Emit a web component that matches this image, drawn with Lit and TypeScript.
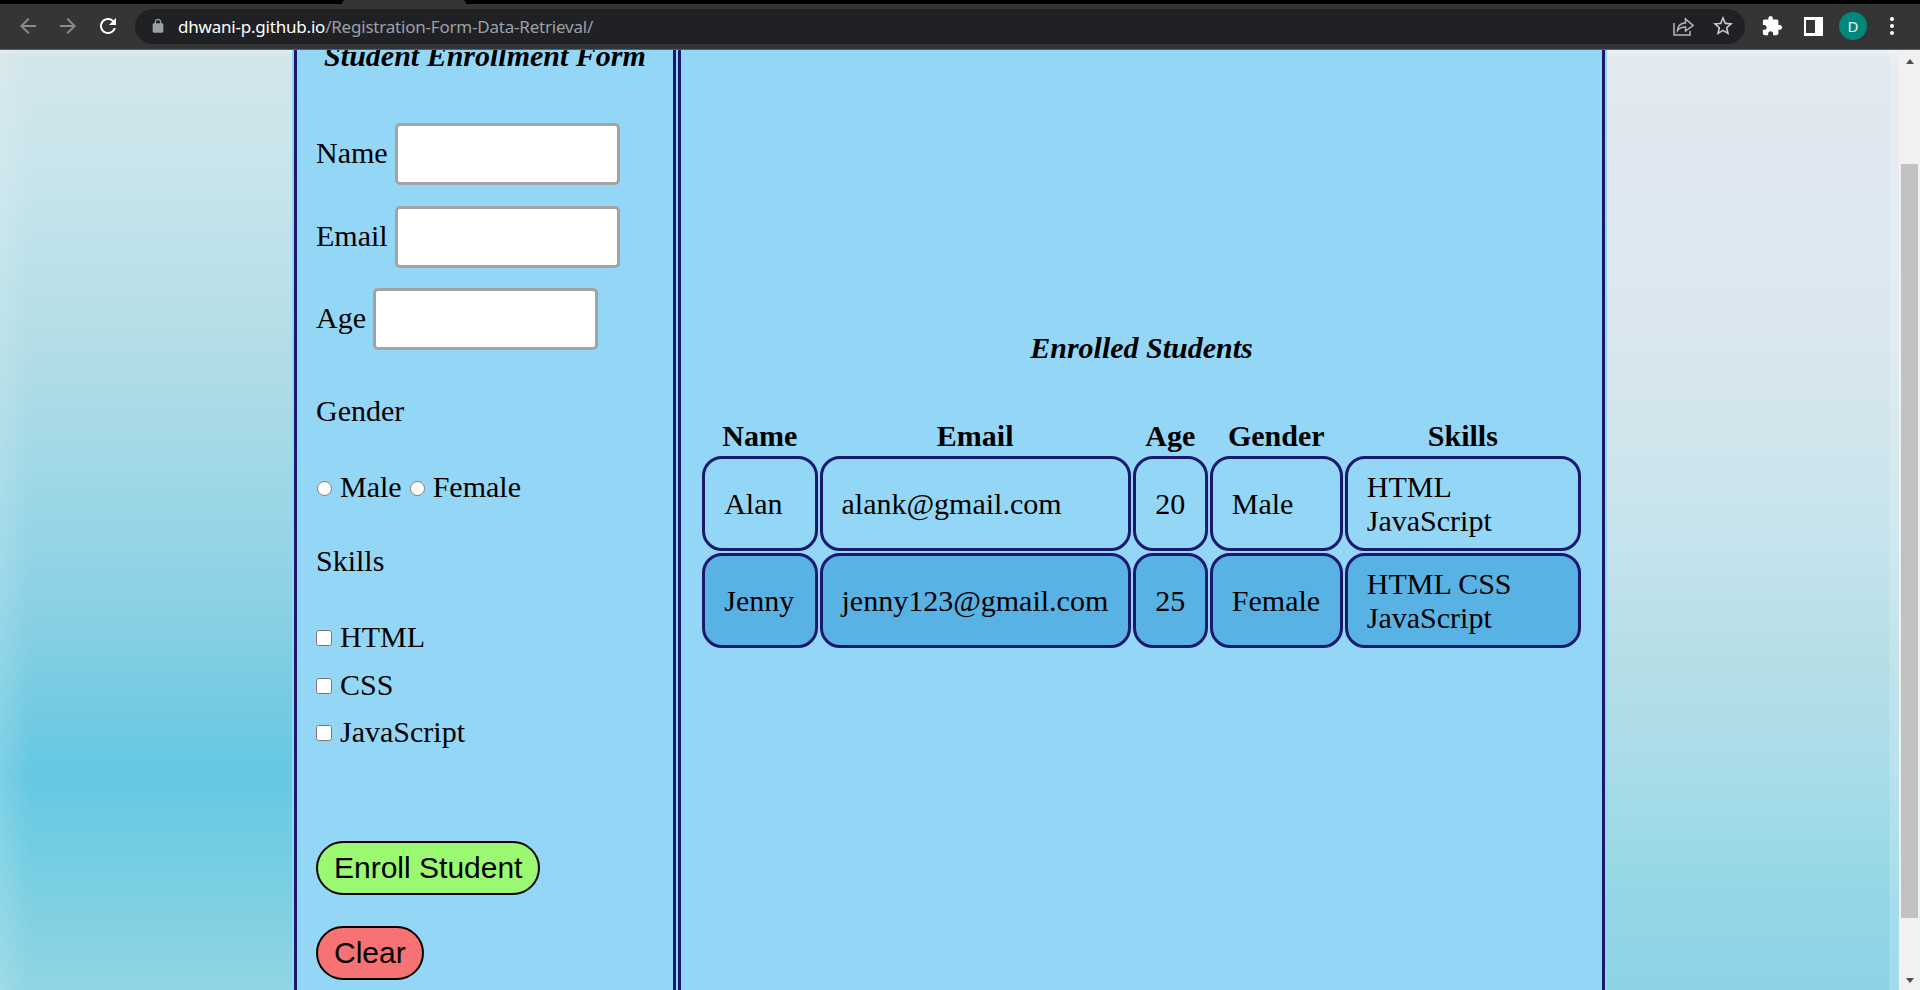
import { LitElement, html, css, svg } from "lit";
import { customElement } from "lit/decorators.js";

const ICONS = {
  back: "M20 11H7.83l5.59-5.59L12 4l-8 8 8 8 1.41-1.41L7.83 13H20v-2z",
  forward: "M12 4l-1.41 1.41L16.17 11H4v2h12.17l-5.58 5.59L12 20l8-8z",
  reload: "M17.65 6.35A7.958 7.958 0 0 0 12 4c-4.42 0-7.99 3.58-7.99 8s3.57 8 7.99 8c3.73 0 6.84-2.55 7.73-6h-2.08A5.99 5.99 0 0 1 12 18c-3.31 0-6-2.69-6-6s2.69-6 6-6c1.66 0 3.14.69 4.22 1.78L13 11h7V4l-2.35 2.35z",
  lock: "M18 8h-1V6c0-2.76-2.24-5-5-5S7 3.24 7 6v2H6c-1.1 0-2 .9-2 2v10c0 1.1.9 2 2 2h12c1.1 0 2-.9 2-2V10c0-1.1-.9-2-2-2zM9 8V6c0-1.66 1.34-3 3-3s3 1.34 3 3v2H9z",
  star: "M22 9.24l-7.19-.62L12 2 9.19 8.63 2 9.24l5.46 4.73L5.82 21 12 17.27 18.18 21l-1.63-7.03L22 9.24zM12 15.4l-3.76 2.27 1-4.28-3.32-2.88 4.38-.38L12 6.1l1.71 4.04 4.38.38-3.32 2.88 1 4.28L12 15.4z",
  ext: "M20.5 11H19V7c0-1.1-.9-2-2-2h-4V3.5C13 2.12 11.88 1 10.5 1S8 2.12 8 3.5V5H4c-1.1 0-1.99.9-1.99 2v3.8H3.5c1.49 0 2.7 1.21 2.7 2.7s-1.21 2.7-2.7 2.7H2V20c0 1.1.9 2 2 2h3.8v-1.5c0-1.49 1.21-2.7 2.7-2.7 1.49 0 2.7 1.21 2.7 2.7V22H17c1.1 0 2-.9 2-2v-4h1.5c1.38 0 2.5-1.12 2.5-2.5S21.88 11 20.5 11z",
};

const icon = (d: string, cls: string) =>
  html`<svg class=${cls} viewBox="0 0 24 24">${svg`<path d=${d} fill="currentColor"></path>`}</svg>`;

const STUDENTS = [
  { name: "Alan", email: "alank@gmail.com", age: "20", gender: "Male", skills: "HTML JavaScript" },
  { name: "Jenny", email: "jenny123@gmail.com", age: "25", gender: "Female", skills: "HTML CSS JavaScript" },
];

@customElement("app-root")
export class AppRoot extends LitElement {
  static styles = css`
    :host { display: flex; flex-direction: column; width: 1920px; height: 990px; overflow: hidden; font-family: "Liberation Serif", serif; color: #000; }
    * { box-sizing: border-box; }

    .tabstrip { height: 4px; background: #000; flex: none; }
    .tab { width: 124px; height: 4px; margin-left: 342px; background: #353535; border-radius: 5px 5px 0 0; }
    .toolbar { height: 46px; flex: none; display: flex; align-items: center; background: #353535; border-bottom: 1px solid #5d5d5d; padding: 0 0 1px 16px; color: #fff; }
    .ic { width: 24px; height: 24px; flex: none; display: block; }
    .nav-gap { margin-left: 16px; }
    .dim { color: #8a8a8a; }
    .pill { margin-left: 15px; width: 1610px; height: 35px; flex: none; background: #202124; border-radius: 18px; display: flex; align-items: center; padding: 0 10px 0 15px; }
    .lock { width: 16px; height: 16px; color: #9aa0a6; }
    .url { margin-left: 12px; font: 17px "Noto Sans", sans-serif; letter-spacing: -0.21px; white-space: nowrap; color: #9aa0a6; flex: 1; }
    .url b { font-weight: 400; color: #fff; }
    .share { width: 22px; height: 22px; color: #b4b6b8; flex: none; }
    .star { width: 24px; height: 24px; color: #c8cacc; margin-left: 17px; }
    .ext { width: 22px; height: 22px; margin-left: 16px; }
    .side { width: 19px; height: 19px; margin-left: 21px; flex: none; display: flex; border: 3px solid #fff; border-left-width: 2px; background: #fff; }
    .side i { display: block; width: 9px; background: #353535; }
    .avatar { width: 28px; height: 28px; margin-left: 16px; border-radius: 50%; background: #00897b; flex: none; display: flex; align-items: center; justify-content: center; font: 15px "Noto Sans", sans-serif; color: #e6f5f3; }
    .kebab { margin-left: 23px; display: flex; flex-direction: column; gap: 3px; flex: none; }
    .kebab i { display: block; width: 4px; height: 4px; border-radius: 50%; background: #fff; }

    .viewport { flex: 1; min-height: 0; display: flex; overflow: hidden; }
    .page { flex: 1; min-width: 0; display: flex; align-items: stretch; overflow: hidden; }
    .bg { flex: 1; }
    .bg-l { background:
      linear-gradient(90deg, rgba(255,255,255,.14), rgba(255,255,255,0) 30px),
      linear-gradient(180deg, #dcecf3 0, #d3e5ea 6px, #c8e5ec 120px, #b2dde6 300px, #a0d8e7 420px, #8ed2e5 540px, #74cbe2 660px, #66c8e2 725px, #75cee2 810px, #90d5e4 940px); }
    .bg-r { background:
      linear-gradient(270deg, rgba(255,255,255,.18), rgba(255,255,255,.18) 9px, rgba(255,255,255,0) 10px),
      linear-gradient(180deg, #eaf3f9 0, #e2e9ee 8px, #e0e8f0 100px, #dde9f1 200px, #d8e6ee 300px, #cfe5ec 400px, #c4e3ed 500px, #b6dee6 600px, #a9dce9 720px, #95d7e6 840px, #8dd3e6 940px); }
    .sheet { flex: none; width: 1315px; display: flex; gap: 2px; padding: 0 2px; background: #94d6f5; }
    .panel { border: solid #191970; border-width: 0 3px; background: #94d6f5; }
    .form-panel { width: 382px; flex: none; padding-left: 19px; }
    .list-panel { flex: 1; min-width: 0; }
    h2 { margin: 0; font-size: 30px; line-height: 34px; font-weight: 700; font-style: italic; text-align: center; }
    .form-panel h2 { margin: -11px 0 0 -19px; }
    .list-panel h2 { margin-top: 281px; }

    .field { display: flex; align-items: center; gap: 7.5px; font-size: 30px; line-height: 34px; margin-bottom: 20.5px; }
    .field span { margin-bottom: 2px; }
    .fields { margin-top: 50px; }
    .field input { width: 225px; height: 62px; border: 3px solid #a3a3a3; border-radius: 5px; background: #fff; padding: 0; margin: 0; outline: none; }
    .text { font-size: 30px; line-height: 34px; }
    .gender-head { margin-top: 44px; }
    .gender { margin-top: 42px; display: flex; align-items: center; }
    .skills-head { margin-top: 40px; }
    .skills { margin-top: 42px; display: flex; flex-direction: column; gap: 13.5px; }
    .opt { display: flex; align-items: center; }
    .gender input { width: 15px; height: 15px; margin: 3px 8px 0 1px; flex: none; }
    .gender span + input { margin-left: 8px; }
    .skills input { width: 16px; height: 16px; margin: 2px 8px 0 0; flex: none; }

    .btn { display: block; height: 54px; padding: 0 16px; border: 2.5px solid #000; border-radius: 27px; font: 30px/1 "Liberation Sans", sans-serif; color: #000; }
    .enroll { margin-top: 92px; background: #9bf871; }
    .clear { margin-top: 31px; background: #f77272; }

    table { margin: 52px auto 0; border-collapse: separate; border-spacing: 2.5px; table-layout: fixed; width: 881px; font-size: 30px; }
    th { padding: 0; line-height: 34.5px; font-weight: 700; }
    td { padding: 11px 19px 9px; line-height: 34.5px; height: 95px; border: 3px solid #191970; border-radius: 20px; vertical-align: middle; }
    tr.alt td { background: #58b2e3; }
    td.c-age { text-align: center; padding: 11px 0 9px; }
    .col-name { width: 115.3px; }
    .col-email { width: 311.3px; }
    .col-age { width: 75px; }
    .col-gender { width: 133px; }
    .col-skills { width: 236px; }

    .scrollbar { width: 21px; flex: none; background: #f1f1f1; display: flex; flex-direction: column; align-items: center; }
    .up { margin-top: 9px; width: 0; height: 0; border: solid transparent; border-width: 0 4.5px 5px; border-bottom-color: #505050; }
    .thumb { margin-top: 100px; width: 17px; height: 754px; background: #c1c1c1; }
    .down { margin-top: 60px; width: 0; height: 0; border: solid transparent; border-width: 5px 4.5px 0; border-top-color: #505050; }
  `;

  render() {
    return html`
      <div class="tabstrip"><div class="tab"></div></div>
      <div class="toolbar">
        ${icon(ICONS.back, "ic dim")}
        ${icon(ICONS.forward, "ic dim nav-gap")}
        ${icon(ICONS.reload, "ic nav-gap")}
        <div class="pill">
          ${icon(ICONS.lock, "lock")}
          <div class="url"><b>dhwani-p.github.io</b>/Registration-Form-Data-Retrieval/</div>
          <svg class="share" viewBox="0 0 22 22" fill="none" stroke="currentColor" stroke-width="1.5">
            <path d="M2 8v12h16v-4"></path>
            <path d="M5.500 15.500c.5-4.500 3.500-7.500 8-7.500V4l7.500 6.500-7.500 5.500v-4c-3.500 0-6.200 1-8 3.500z"></path>
          </svg>
          ${icon(ICONS.star, "star")}
        </div>
        ${icon(ICONS.ext, "ext")}
        <div class="side"><i></i></div>
        <div class="avatar">D</div>
        <div class="kebab"><i></i><i></i><i></i></div>
      </div>
      <div class="viewport">
        <div class="page">
          <div class="bg bg-l"></div>
          <div class="sheet">
            <section class="panel form-panel">
              <h2>Student Enrollment Form</h2>
              <div class="fields">
                <label class="field"><span>Name</span><input type="text" /></label>
                <label class="field"><span>Email</span><input type="text" /></label>
                <label class="field"><span>Age</span><input type="text" /></label>
              </div>
              <div class="text gender-head">Gender</div>
              <div class="text gender">
                <input type="radio" name="g" /><span>Male</span>
                <input type="radio" name="g" /><span>Female</span>
              </div>
              <div class="text skills-head">Skills</div>
              <div class="skills text">
                ${["HTML", "CSS", "JavaScript"].map(
                  (s) => html`<label class="opt"><input type="checkbox" /><span>${s}</span></label>`
                )}
              </div>
              <button class="btn enroll">Enroll Student</button>
              <button class="btn clear">Clear</button>
            </section>
            <section class="panel list-panel">
              <h2>Enrolled Students</h2>
              <table>
                <colgroup>
                  <col class="col-name" /><col class="col-email" /><col class="col-age" /><col class="col-gender" /><col class="col-skills" />
                </colgroup>
                <thead>
                  <tr><th>Name</th><th>Email</th><th>Age</th><th>Gender</th><th>Skills</th></tr>
                </thead>
                <tbody>
                  ${STUDENTS.map(
                    (s, i) => html`<tr class=${i % 2 ? "alt" : ""}>
                      <td>${s.name}</td><td>${s.email}</td><td class="c-age">${s.age}</td><td>${s.gender}</td><td>${s.skills}</td>
                    </tr>`
                  )}
                </tbody>
              </table>
            </section>
          </div>
          <div class="bg bg-r"></div>
        </div>
        <div class="scrollbar">
          <div class="up"></div>
          <div class="thumb"></div>
          <div class="down"></div>
        </div>
      </div>
    `;
  }
}
